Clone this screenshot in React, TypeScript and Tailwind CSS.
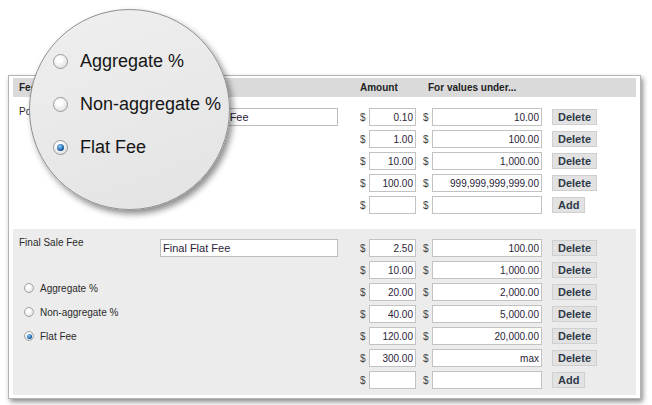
import React from 'react';

type Tier = [string, string];

const postingTiers: Tier[] = [
  ['0.10', '10.00'],
  ['1.00', '100.00'],
  ['10.00', '1,000.00'],
  ['100.00', '999,999,999,999.00'],
];

const finalTiers: Tier[] = [
  ['2.50', '100.00'],
  ['10.00', '1,000.00'],
  ['20.00', '2,000.00'],
  ['40.00', '5,000.00'],
  ['120.00', '20,000.00'],
  ['300.00', 'max'],
];

function Radio({ checked, big }: { checked?: boolean; big?: boolean }) {
  return (
    <span
      className={
        big
          ? 'size-[15px] shrink-0 rounded-full border border-[#9a9a9a] bg-[radial-gradient(circle_at_40%_35%,#ffffff_20%,#d4d4d4)] flex items-center justify-center'
          : 'size-[10px] shrink-0 rounded-full border border-[#a4a4a4] bg-[radial-gradient(circle_at_40%_35%,#ffffff_20%,#d6d6d6)] flex items-center justify-center'
      }
    >
      {checked && (
        <span
          className={
            big
              ? 'size-[7px] rounded-full bg-[radial-gradient(circle_at_40%_35%,#8fd0ff,#0b4f96_70%)]'
              : 'size-[5px] rounded-full bg-[radial-gradient(circle_at_40%_35%,#8fd0ff,#0b4f96_70%)]'
          }
        />
      )}
    </span>
  );
}

function TierRow({ amount, under, last }: { amount: string; under: string; last?: boolean }) {
  return (
    <div className="flex items-center h-[18px]">
      <span className="w-[9px] text-[10px] text-[#444]">$</span>
      <input
        readOnly
        value={amount}
        className="w-[47px] h-[18px] border border-[#c2c2c2] bg-white pr-[2px] text-right text-[10px] text-[#2a2438] outline-none"
      />
      <span className="ml-[7px] w-[9px] text-[10px] text-[#444]">$</span>
      <input
        readOnly
        value={under}
        className="w-[110px] h-[18px] border border-[#c2c2c2] bg-white pr-[2px] text-right text-[10px] text-[#2a2438] outline-none"
      />
      <button className="ml-[10px] h-[16px] px-[5px] border border-[#cfcfcf] bg-[#e2e2e2] text-[11px] font-bold leading-[14px] text-[#2f3a48]">
        {last ? 'Add' : 'Delete'}
      </button>
    </div>
  );
}

function FeeSection({
  label,
  name,
  tiers,
  showTypes,
  className,
}: {
  label: string;
  name: string;
  tiers: Tier[];
  showTypes?: boolean;
  className: string;
}) {
  return (
    <div className={className}>
      <div className="w-[147px] shrink-0 pl-[6px] -mt-[2px]">
        <div className="text-[10px] leading-[12px] text-[#2b2b2b]">{label}</div>
        {showTypes && (
          <div className="mt-[32px] pl-[5px] flex flex-col gap-[10px]">
            {['Aggregate %', 'Non-aggregate %', 'Flat Fee'].map((t) => (
              <label key={t} className="flex items-center gap-[6px] h-[14px] text-[10px] text-[#2b2b2b]">
                <Radio checked={t === 'Flat Fee'} />
                {t}
              </label>
            ))}
          </div>
        )}
      </div>
      <input
        readOnly
        value={name}
        className="w-[178px] h-[18px] border border-[#bdbdbd] bg-white pl-[2px] text-[11px] text-[#2a2438] outline-none"
      />
      <div className="ml-[22px] flex flex-col gap-[4px]">
        {tiers.map(([a, u]) => (
          <TierRow key={a} amount={a} under={u} />
        ))}
        <TierRow amount="" under="" last />
      </div>
    </div>
  );
}

export default function App() {
  return (
    <div className="relative w-[652px] h-[405px] overflow-hidden bg-white font-['Liberation_Sans',Arial,sans-serif]">
      <div className="pt-[75px] pl-[8px]">
        <div className="w-[633px] border border-[#b4b4b4] bg-white px-[4px] pt-[2px] pb-[3px] shadow-[2px_3px_5px_rgba(0,0,0,0.45)]">
          <div className="flex items-center h-[19px] bg-[#dadada] text-[10px] font-bold text-[#222]">
            <span className="w-[347px] pl-[6px]">Fee</span>
            <span className="w-[68px]">Amount</span>
            <span>For values under...</span>
          </div>
          <FeeSection
            className="flex items-start bg-white pt-[11px] pb-[15px]"
            label="Posting Fee"
            name="Insertion Flat Fee"
            tiers={postingTiers}
          />
          <FeeSection
            className="flex items-start bg-[#ececec] pt-[10px] pb-[6px]"
            label="Final Sale Fee"
            name="Final Flat Fee"
            tiers={finalTiers}
            showTypes
          />
        </div>
      </div>

      {/* magnifier over the fee type radios */}
      <div className="absolute left-[29px] top-[9px] size-[201px] rounded-full border border-[#8e8e8e] bg-[linear-gradient(160deg,#efefef,#e3e3e3)] shadow-[3px_4px_6px_rgba(0,0,0,0.45)]">
        <div className="flex flex-col gap-[25px] pt-[42px] pl-[23px]">
          {['Aggregate %', 'Non-aggregate %', 'Flat Fee'].map((t) => (
            <div key={t} className="flex items-center gap-[12px] h-[18px] text-[18px] text-[#161616]">
              <Radio big checked={t === 'Flat Fee'} />
              {t}
            </div>
          ))}
        </div>
      </div>
    </div>
  );
}
